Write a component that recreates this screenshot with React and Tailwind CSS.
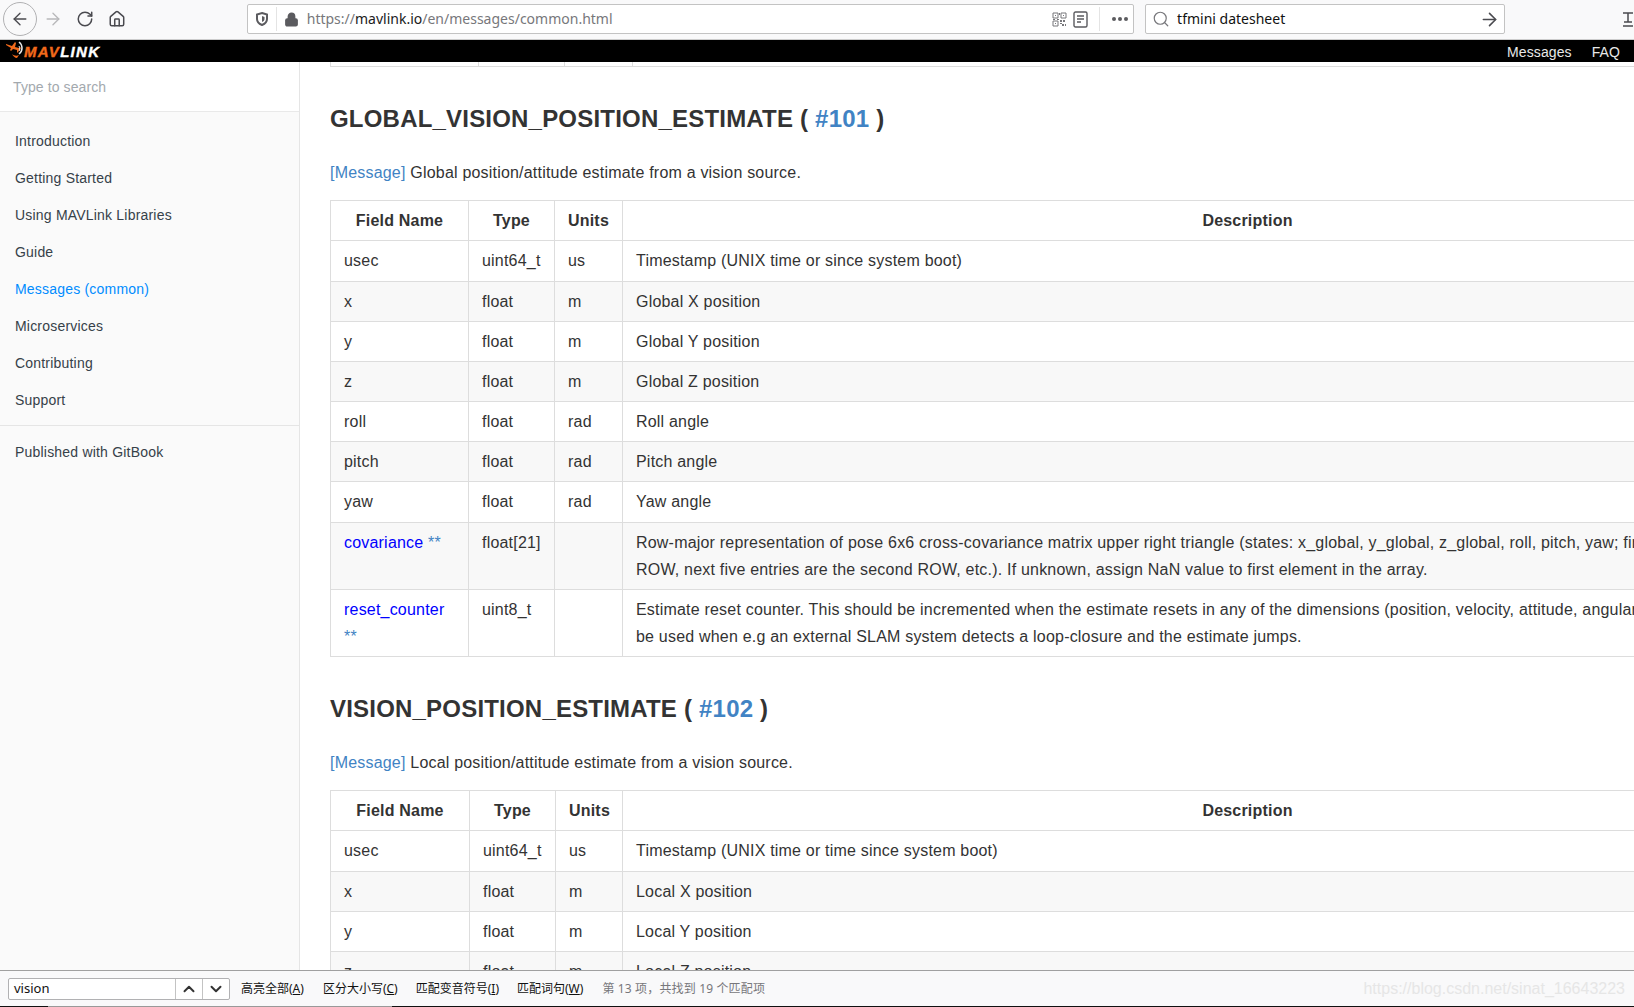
import { ArrowLeft, ArrowRight, RotateCw, House, Lock, ChevronUp, ChevronDown, Search } from 'lucide-react';

const sans = "font-['Liberation_Sans',Arial,sans-serif]";

const navItems = ['Introduction', 'Getting Started', 'Using MAVLink Libraries', 'Guide', 'Messages (common)', 'Microservices', 'Contributing', 'Support'];

const table1 = [
  ['usec', 'uint64_t', 'us', 'Timestamp (UNIX time or since system boot)'],
  ['x', 'float', 'm', 'Global X position'],
  ['y', 'float', 'm', 'Global Y position'],
  ['z', 'float', 'm', 'Global Z position'],
  ['roll', 'float', 'rad', 'Roll angle'],
  ['pitch', 'float', 'rad', 'Pitch angle'],
  ['yaw', 'float', 'rad', 'Yaw angle'],
];

const table2 = [
  ['usec', 'uint64_t', 'us', 'Timestamp (UNIX time or time since system boot)'],
  ['x', 'float', 'm', 'Local X position'],
  ['y', 'float', 'm', 'Local Y position'],
  ['z', 'float', 'm', 'Local Z position'],
];

function Logo() {
  return (
    <div className="flex items-center pl-[6px]">
      <svg width="19" height="18" viewBox="0 0 19 18" className="-mr-[1px] -mt-[3px]">
        <path d="M0 3l6 2 3-4 1 1-1 4 4 1 1-1 1 1-2 2-1 3-1-1 0-2-4-1-2 2-1-1 1-2-5-3z" fill="#f26a1b" />
        <path d="M13 1c4 3 4 9 0 12" fill="none" stroke="#e8e8e8" strokeWidth="1.500" />
        <path d="M13 5c1 2 1 4 0 5" fill="none" stroke="#e8e8e8" strokeWidth="1" />
        <path d="M6 13c2 2 5 2 7 1l-2 3c-2 0-4-2-5-4z" fill="#f26a1b" />
      </svg>
      <span className={`${sans} text-[15px] font-bold italic tracking-[1.3px] leading-none [-webkit-text-stroke:0.4px]`}>
        <span className="text-[#f26a1b]">MAV</span>
        <span className="text-white">LINK</span>
      </span>
    </div>
  );
}

function Toolbar() {
  return (
    <div className="h-[40px] shrink-0 bg-[#f9f9fa] border-b border-[#cccccc] pb-px flex items-center font-['Noto_Sans',sans-serif]">
      <div className="ml-[3px] w-[34px] h-[34px] rounded-full border border-[#b1b1b3] flex items-center justify-center">
        <ArrowLeft size={20} strokeWidth={1.6} className="text-[#4a4a4f]" />
      </div>
      <ArrowRight size={20} strokeWidth={1.6} className="ml-[6px] text-[#b8b8ba]" />
      <RotateCw size={18} strokeWidth={2} className="ml-[13px] text-[#4a4a4f]" />
      <House size={18} strokeWidth={2} className="ml-[14px] text-[#4a4a4f]" />
      <div className="ml-[121px] w-[890px] h-[30px] bg-white border border-[#c3c3c3] rounded-[2px] flex items-center">
        <svg width="16" height="16" viewBox="0 0 16 16" className="ml-[6px]" fill="none" stroke="#5b5b5f" strokeWidth="2">
          <path d="M8 2l5 1.500V8c0 3-2.500 5-5 6-2.500-1-5-3-5-6V3.500z" />
          <path d="M8 5l2.500 1v2c0 1.500-1.200 2.500-2.500 3z" fill="#5b5b5f" stroke="none" />
        </svg>
        <div className="ml-[6px] w-px h-[24px] bg-[#e4e4e4]" />
        <Lock size={15} strokeWidth={2.4} fill="#5b5b5f" className="ml-[7px] text-[#5b5b5f]" />
        <div className="ml-[8px] -mt-[2px] text-[14px] text-[#77777b] whitespace-nowrap">
          https://<span className="text-[#202020]">mavlink.io</span>/en/messages/common.html
        </div>
        <div className="ml-auto flex items-center">
          <svg width="15" height="15" viewBox="0 0 15 15" className="mr-[6px]" fill="#77777b">
            <path d="M1 1h5v5H1zM9 1h5v5H9zM1 9h5v5H1z" fill="none" stroke="#77777b" />
            <path d="M3 3h1v1H3zM11 3h1v1h-1zM3 11h1v1H3zM8 8h2v2H8zM11 8h2v2h-2zM8 11h2v1H8zM10 12h2v2h-2zM13 12h1v2h-1zM7 1h1v2H7zM1 7h2v1H1zM5 7h2v1H5z" />
          </svg>
          <svg width="15" height="17" viewBox="0 0 15 17" fill="none" stroke="#5b5b5f" strokeWidth="1.400">
            <rect x="1" y="1" width="13" height="15" rx="1.500" />
            <path d="M4 5h7M4 8h7M4 11h4" />
          </svg>
          <div className="ml-[11px] w-px h-[24px] bg-[#e4e4e4]" />
          <div className="ml-[12px] mr-[5px] flex gap-[2px]">
            <span className="w-[4px] h-[4px] rounded-full bg-[#5b5b5f]" />
            <span className="w-[4px] h-[4px] rounded-full bg-[#5b5b5f]" />
            <span className="w-[4px] h-[4px] rounded-full bg-[#5b5b5f]" />
          </div>
        </div>
      </div>
      <div className="ml-[11px] w-[361px] h-[30px] bg-white border border-[#c3c3c3] rounded-[2px] flex items-center">
        <Search size={18} strokeWidth={1.6} className="ml-[6px] text-[#77777b]" />
        <span className="ml-[7px] -mt-[2px] text-[14px] text-[#111111]">tfmini datesheet</span>
        <ArrowRight size={21} strokeWidth={1.8} className="ml-auto mr-[4px] text-[#4a4a4f]" />
      </div>
      <svg width="12" height="18" viewBox="0 0 12 18" className="ml-[117px] shrink-0" fill="none" stroke="#4a4a4f" strokeWidth="1.500">
        <path d="M1 3h10M6 3v9M2 12h8M1 16h10" />
      </svg>
    </div>
  );
}

function Sidebar() {
  return (
    <aside className={`${sans} w-[300px] shrink-0 bg-[#fafafa] border-r border-[#e5e5e5] text-[14px] tracking-[0.2px] text-[#364149]`}>
      <div className="h-[50px] bg-white border-b border-[#e9e9e9] pl-[13px] pt-[2px] flex items-center text-[#a3a9ae] tracking-[0.1px]">
        Type to search
      </div>
      <div className="pt-[11px] pb-[6px] border-b border-[#e5e5e5]">
        {navItems.map((item) => (
          <div key={item} className={`h-[37px] pl-[15px] flex items-center ${item === 'Messages (common)' ? 'text-[#008cff]' : ''}`}>
            {item}
          </div>
        ))}
      </div>
      <div className="h-[52px] pl-[15px] flex items-center">Published with GitBook</div>
    </aside>
  );
}

function Cell({ w, children, className = 'pt-[7px]' }) {
  return (
    <div className={`${w} shrink-0 border-r border-[#dddddd] px-[13px] ${className}`}>
      {children}
    </div>
  );
}

function Header({ cols }) {
  return (
    <div className="flex h-[41px] border-t border-b border-l border-[#dddddd] font-bold text-center">
      <Cell w={cols[0]}>Field Name</Cell>
      <Cell w={cols[1]}>Type</Cell>
      <Cell w={cols[2]}>Units</Cell>
      <Cell w="w-[1250px]">Description</Cell>
    </div>
  );
}

function Row({ row, index, cols, wide }) {
  return (
    <div className={`flex ${wide ? 'h-[41px]' : 'h-[40px]'} border-b border-l border-[#dddddd] ${index % 2 ? 'bg-[#f8f8f8]' : 'bg-white'}`}>
      <Cell w={cols[0]}>{row[0]}</Cell>
      <Cell w={cols[1]}>{row[1]}</Cell>
      <Cell w={cols[2]}>{row[2]}</Cell>
      <Cell w="w-[1250px]">{row[3]}</Cell>
    </div>
  );
}

function Message({ name, id, text, children }) {
  return (
    <section>
      <h2 className="text-[24px] font-bold leading-[36px] tracking-[0.2px] text-[#333333]">
        {name} ( <span className="text-[#4183c4]">#{id}</span> )
      </h2>
      <p className="mt-[23px] leading-[26px]">
        <span className="text-[#4183c4]">[Message]</span> {text}
      </p>
      {children}
    </section>
  );
}

const cols1 = ['w-[138px]', 'w-[86px]', 'w-[68px]'];
const cols2 = ['w-[139px]', 'w-[86px]', 'w-[67px]'];

function Content() {
  return (
    <main className={`${sans} flex-1 min-w-0 overflow-hidden bg-white pl-[30px] text-[16px] leading-[26px] tracking-[0.2px] text-[#333333]`}>
      <div className="flex h-[5px] w-[1542px] border-b border-l border-[#dddddd]">
        <div className="w-[148px] border-r border-[#dddddd]" />
        <div className="w-[86px] border-r border-[#dddddd]" />
        <div className="w-[68px] border-r border-[#dddddd]" />
      </div>
      <div className="w-[1542px] pt-[34px]">
        <Message name="GLOBAL_VISION_POSITION_ESTIMATE" id="101" text="Global position/attitude estimate from a vision source.">
          <div className="mt-[14px]">
            <Header cols={cols1} />
            {table1.map((row, i) => (
              <Row key={row[0]} row={row} index={i} cols={cols1} wide={i === 0 || i === 6} />
            ))}
            <div className="flex border-b border-l border-[#dddddd] bg-[#f8f8f8] h-[67px] leading-[27px]">
              <Cell w={cols1[0]} className="pt-[6px] text-[#0000ff]">
                covariance <span className="text-[#4183c4]">**</span>
              </Cell>
              <Cell w={cols1[1]} className="pt-[6px]">float[21]</Cell>
              <Cell w={cols1[2]} />
              <Cell w="w-[1250px]" className="pt-[6px]">
                Row-major representation of pose 6x6 cross-covariance matrix upper right triangle (states: x_global, y_global, z_global, roll, pitch, yaw; first six entries are the first
                <br />
                ROW, next five entries are the second ROW, etc.). If unknown, assign NaN value to first element in the array.
              </Cell>
            </div>
            <div className="flex border-b border-l border-[#dddddd] bg-white h-[67px] leading-[27px]">
              <Cell w={cols1[0]} className="pt-[6px] text-[#0000ff]">
                reset_counter <span className="text-[#4183c4]">**</span>
              </Cell>
              <Cell w={cols1[1]} className="pt-[6px]">uint8_t</Cell>
              <Cell w={cols1[2]} />
              <Cell w="w-[1250px]" className="pt-[6px]">
                Estimate reset counter. This should be incremented when the estimate resets in any of the dimensions (position, velocity, attitude, angular velocity). This helps
                <br />
                be used when e.g an external SLAM system detects a loop-closure and the estimate jumps.
              </Cell>
            </div>
          </div>
        </Message>
        <div className="mt-[34px]">
          <Message name="VISION_POSITION_ESTIMATE" id="102" text="Local position/attitude estimate from a vision source.">
            <div className="mt-[14px]">
              <Header cols={cols2} />
              {table2.map((row, i) => (
                <Row key={row[0]} row={row} index={i} cols={cols2} wide={i === 0} />
              ))}
            </div>
          </Message>
        </div>
      </div>
    </main>
  );
}

function FindBar() {
  return (
    <div className="h-[36px] shrink-0 bg-[#f9f9fa] border-t border-[#a0a0a0] flex items-center font-['Noto_Sans','Noto_Sans_CJK_SC',sans-serif] text-[12px] text-[#111111] whitespace-nowrap">
      <div className="ml-[8px] w-[222px] h-[22px] bg-white border border-[#b1b1b3] rounded-[2px] flex items-center">
        <span className="ml-[5px] flex-1 text-[13px]">vision</span>
        <div className="w-[27px] h-full border-l border-[#c3c3c3] flex items-center justify-center">
          <ChevronUp size={18} strokeWidth={2.6} className="text-[#333333]" />
        </div>
        <div className="w-[27px] h-full border-l border-[#c3c3c3] flex items-center justify-center">
          <ChevronDown size={18} strokeWidth={2.6} className="text-[#333333]" />
        </div>
      </div>
      <span className="ml-[11px]">高亮全部(<span className="underline">A</span>)</span>
      <span className="ml-[19px]">区分大小写(<span className="underline">C</span>)</span>
      <span className="ml-[18px]">匹配变音符号(<span className="underline">I</span>)</span>
      <span className="ml-[18px]">匹配词句(<span className="underline">W</span>)</span>
      <span className="ml-[19px] text-[#77777b] tracking-[0.15px]">第 13 项，共找到 19 个匹配项</span>
      <span className={`${sans} ml-auto mr-[9px] text-[16px] text-[#e6e6e6]`}>https://blog.csdn.net/sinat_16643223</span>
    </div>
  );
}

export default function App() {
  return (
    <div className="h-[1007px] w-[1634px] overflow-hidden flex flex-col bg-white">
      <Toolbar />
      <div className="h-[22px] shrink-0 bg-black flex items-center justify-between">
        <Logo />
        <div className={`${sans} flex text-[14px] tracking-[0.1px] text-[#e8e8e8] pr-[14px] gap-[20px] pt-[2px]`}>
          <span>Messages</span>
          <span>FAQ</span>
        </div>
      </div>
      <div className="flex flex-1 min-h-0">
        <Sidebar />
        <Content />
      </div>
      <FindBar />
      <div className="h-px shrink-0 flex bg-[#111111]">
        <div className="ml-[48px] w-[344px] bg-[#999999]" />
      </div>
    </div>
  );
}
